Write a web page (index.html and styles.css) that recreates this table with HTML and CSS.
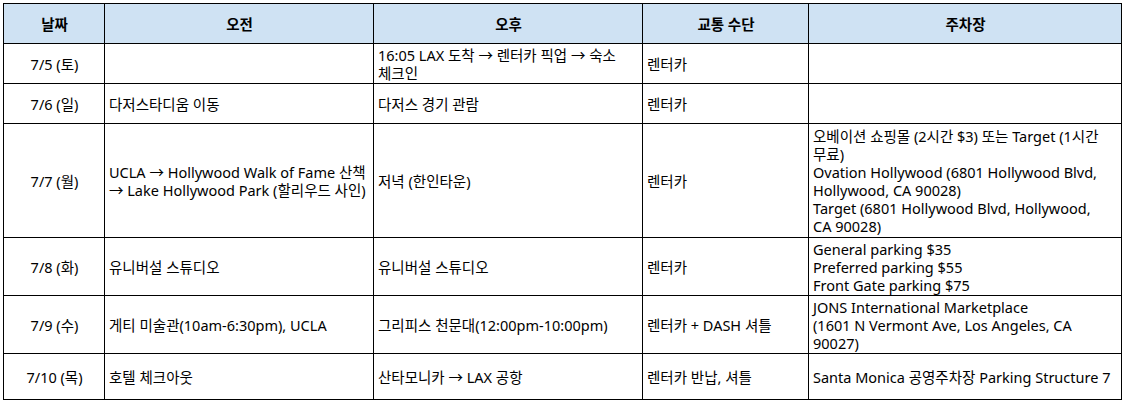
FILE: index.html
```html
<!DOCTYPE html>
<html lang="ko">
<head>
<meta charset="utf-8">
<link rel="stylesheet" href="styles.css">
</head>
<body>
<table class="plan">
  <colgroup>
    <col class="c-date"><col class="c-am"><col class="c-pm"><col class="c-tr"><col class="c-park">
  </colgroup>
  <thead>
    <tr class="r-head">
      <th>날짜</th><th>오전</th><th>오후</th><th>교통 수단</th><th>주차장</th>
    </tr>
  </thead>
  <tbody>
    <tr class="r40">
      <td class="date">7/5 (토)</td>
      <td></td>
      <td>16:05 LAX 도착 → 렌터카 픽업 → 숙소<br>체크인</td>
      <td>렌터카</td>
      <td></td>
    </tr>
    <tr class="r40">
      <td class="date">7/6 (일)</td>
      <td>다저스타디움 이동</td>
      <td>다저스 경기 관람</td>
      <td>렌터카</td>
      <td></td>
    </tr>
    <tr class="r114">
      <td class="date">7/7 (월)</td>
      <td>UCLA → Hollywood Walk of Fame 산책<br>→ Lake Hollywood Park (할리우드 사인)</td>
      <td>저녁 (한인타운)</td>
      <td>렌터카</td>
      <td>오베이션 쇼핑몰 (2시간 $3) 또는 Target (1시간<br>무료)<br>Ovation Hollywood (6801 Hollywood Blvd,<br>Hollywood, CA 90028)<br>Target (6801 Hollywood Blvd, Hollywood,<br>CA 90028)</td>
    </tr>
    <tr class="r58">
      <td class="date">7/8 (화)</td>
      <td>유니버설 스튜디오</td>
      <td>유니버설 스튜디오</td>
      <td>렌터카</td>
      <td>General parking $35<br>Preferred parking $55<br>Front Gate parking $75</td>
    </tr>
    <tr class="r58">
      <td class="date">7/9 (수)</td>
      <td>게티 미술관(10am-6:30pm), UCLA</td>
      <td>그리피스 천문대(12:00pm-10:00pm)</td>
      <td>렌터카 + DASH 셔틀</td>
      <td>JONS International Marketplace<br>(1601 N Vermont Ave, Los Angeles, CA<br>90027)</td>
    </tr>
    <tr class="r46">
      <td class="date">7/10 (목)</td>
      <td>호텔 체크아웃</td>
      <td>산타모니카 → LAX 공항</td>
      <td>렌터카 반납, 셔틀</td>
      <td>Santa Monica 공영주차장 Parking Structure 7</td>
    </tr>
  </tbody>
</table>
</body>
</html>
```
FILE: styles.css
```css
html, body {
  margin: 0;
  padding: 0;
  background: #ffffff;
}
body {
  padding: 3px 0 0 3px;
  font-family: "Noto Sans", "Noto Sans CJK KR", sans-serif;
  font-size: 14.5px;
  color: #000000;
}
.plan {
  border-collapse: collapse;
  table-layout: fixed;
  width: 1118px;
}
.c-date { width: 101px; }
.c-am { width: 269px; }
.c-pm { width: 269px; }
.c-tr { width: 166px; }
.c-park { width: 313px; }
.plan th, .plan td {
  border: 1px solid #000000;
  padding: 0 3px 0 4px;
  line-height: 18px;
  vertical-align: middle;
  text-align: left;
  white-space: nowrap;
  overflow: hidden;
}
.plan th {
  background: #cfe2f3;
  font-weight: bold;
  text-align: center;
  font-size: 14.5px;
}
.plan td.date {
  text-align: center;
}
.r-head { height: 40px; }
.r40 { height: 40px; }
.r114 { height: 114px; }
.r58 { height: 58px; }
.r46 { height: 46px; }
```
